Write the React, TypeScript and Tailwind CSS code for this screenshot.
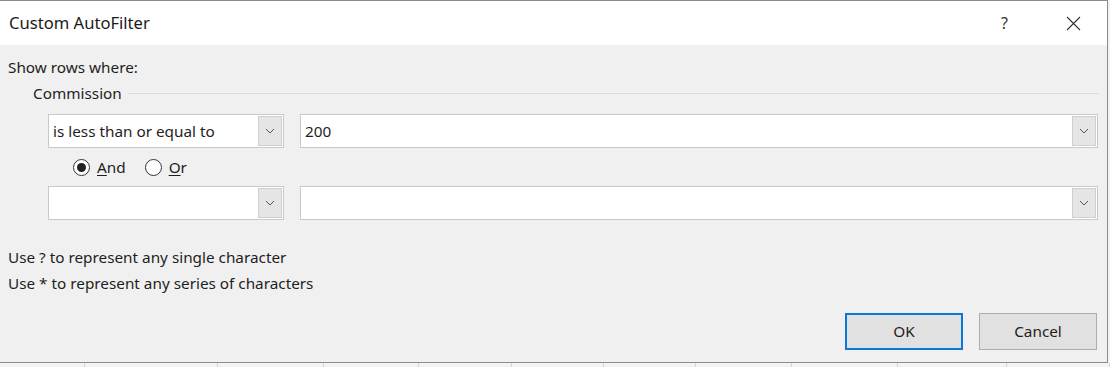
import React from "react";

function Chevron() {
  return (
    <svg width="10" height="6" viewBox="0 0 10 6" fill="none">
      <path d="M1 1l4 4 4-4" stroke="#555" strokeWidth="1" />
    </svg>
  );
}

function DropButton() {
  return (
    <div className="w-[24px] self-stretch flex items-center justify-center bg-[#e5e5e5] border border-[#cfcfcf] m-[1px]">
      <Chevron />
    </div>
  );
}

function Combo({ value, width }: { value?: string; width: string }) {
  return (
    <div className={`${width} h-[34px] flex bg-white border border-[#c9c9c9]`}>
      <div className="flex-1 flex items-center pl-[4px] text-[15.3px] text-[#1e1e1e]">
        {value}
      </div>
      <DropButton />
    </div>
  );
}

function Radio({ checked, label }: { checked?: boolean; label: string }) {
  return (
    <label className="flex items-center gap-[7px]">
      <span className="w-[17px] h-[17px] rounded-full border border-[#333] bg-white flex items-center justify-center">
        {checked && <span className="w-[9px] h-[9px] rounded-full bg-[#222]" />}
      </span>
      <span className="text-[15.3px] text-[#1e1e1e]">
        <span className="underline underline-offset-2">{label[0]}</span>
        {label.slice(1)}
      </span>
    </label>
  );
}

export default function App() {
  return (
    <div
      className="w-[1110px] h-[367px] bg-[#f3f3f3] overflow-hidden flex flex-col"
      style={{ fontFamily: '"Noto Sans", "Open Sans", sans-serif' }}
    >
      <div className="w-[1108px] h-[363px] shrink-0 border-t border-r border-b border-[#8c8c8c] bg-[#f0f0f0] flex flex-col">
        {/* title bar */}
        <div className="h-[44px] bg-white flex items-center pl-[9px] pr-[26px]">
          <span className="text-[16.6px] text-[#1a1a1a] flex-1">Custom AutoFilter</span>
          <span className="text-[16px] text-[#333] mr-[58px]">?</span>
          <svg width="15" height="15" viewBox="0 0 15 15">
            <path d="M1 1l13 13M14 1L1 14" stroke="#333" strokeWidth="1.1" />
          </svg>
        </div>

        <div className="flex flex-col text-[15.3px] text-[#1e1e1e]">
          <div className="mt-[12px] pl-[8px] h-[20px] leading-[20px]">Show rows where:</div>

          <div className="mt-[6px] h-[20px] flex items-center pl-[33px] pr-[8px]">
            <span className="leading-[20px]">Commission</span>
            <div className="flex-1 h-px bg-[#dcdcdc] ml-[6px]" />
          </div>

          <div className="mt-[11px] pl-[48px] flex gap-[16px]">
            <Combo width="w-[236px]" value="is less than or equal to" />
            <Combo width="w-[798px]" value="200" />
          </div>

          <div className="mt-[9px] h-[20px] pl-[73px] flex items-center gap-[19px]">
            <Radio checked label="And" />
            <Radio label="Or" />
          </div>

          <div className="mt-[9px] pl-[48px] flex gap-[16px]">
            <Combo width="w-[236px]" />
            <Combo width="w-[798px]" />
          </div>

          <div className="mt-[27px] pl-[8px] h-[20px] leading-[20px]">
            Use ? to represent any single character
          </div>
          <div className="mt-[6px] pl-[8px] h-[20px] leading-[20px]">
            Use * to represent any series of characters
          </div>

          <div className="mt-[20px] flex justify-end gap-[16px] pr-[10px]">
            <button className="w-[118px] h-[37px] bg-[#e1e1e1] border-2 border-[#0a78d4] text-[15.3px] text-[#1e1e1e]">
              OK
            </button>
            <button className="w-[118px] h-[37px] bg-[#e1e1e1] border border-[#adadad] text-[15.3px] text-[#1e1e1e]">
              Cancel
            </button>
          </div>
        </div>
      </div>
      <div className="flex-1 flex bg-[#f4f4f4]">
        {[93, 145, 116, 104, 102, 100, 101, 104, 116, 120, 112].map((w, i) => (
          <div key={i} className="border-r border-[#d4d4d4]" style={{ width: w }} />
        ))}
      </div>
    </div>
  );
}
